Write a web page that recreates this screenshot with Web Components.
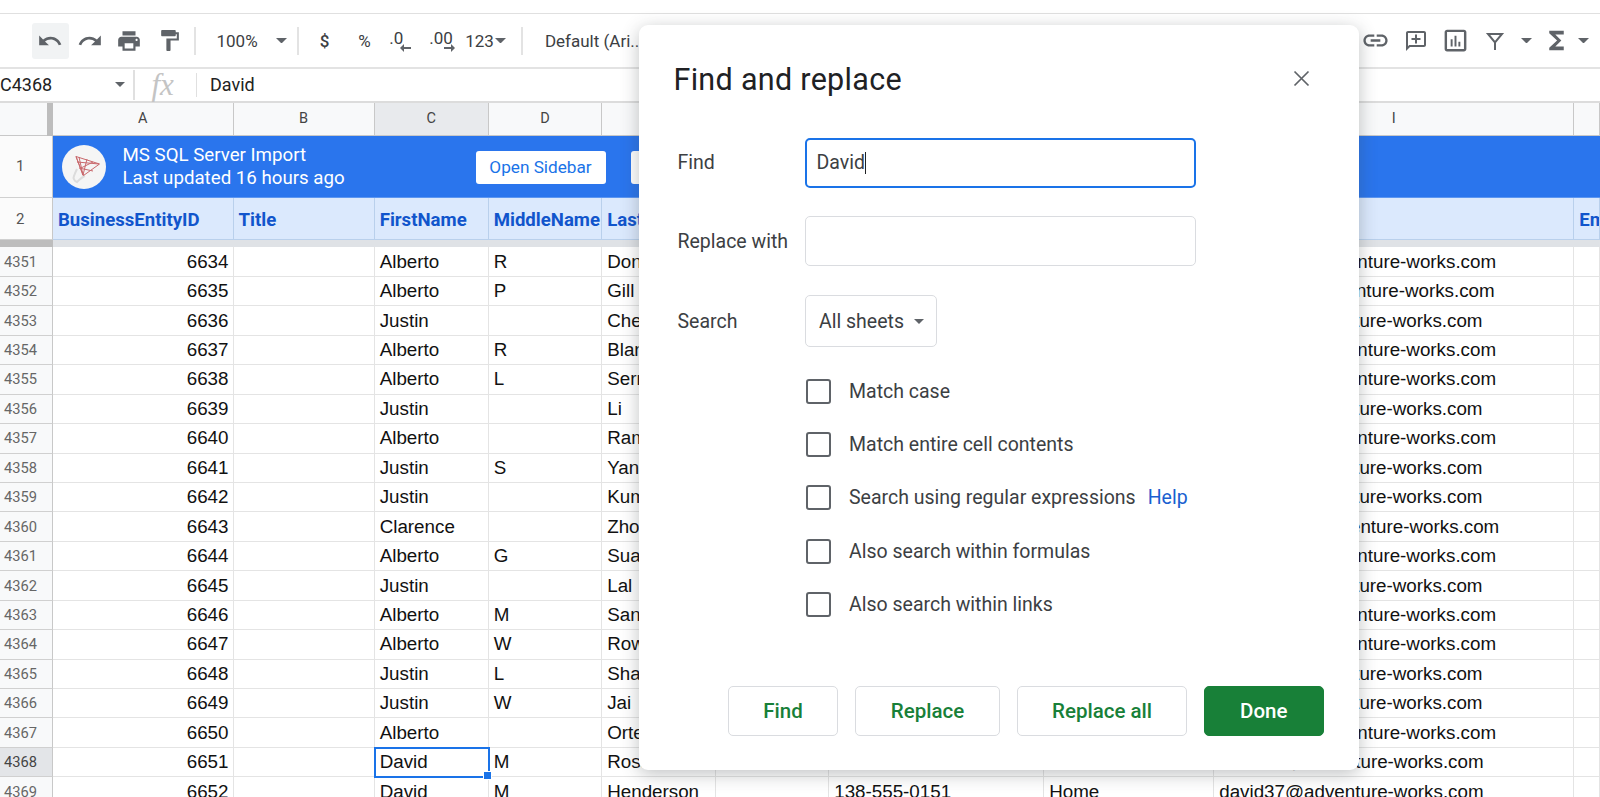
<!DOCTYPE html>
<html lang="en">
<head>
<meta charset="utf-8">
<title>Find and replace</title>
<style>
html,body{margin:0;height:797px;overflow:hidden;background:#fff;font-family:"Liberation Sans",Arial,sans-serif}
</style>
</head>
<body>
<sheet-app>
  <sheet-toolbar></sheet-toolbar>
  <formula-bar cell="C4368" value="David"></formula-bar>
  <sheet-grid></sheet-grid>
  <find-dialog slot="overlay">
    <dlg-check>Match case</dlg-check>
    <dlg-check>Match entire cell contents</dlg-check>
    <dlg-check help="Help">Search using regular expressions</dlg-check>
    <dlg-check>Also search within formulas</dlg-check>
    <dlg-check>Also search within links</dlg-check>
    <dlg-button slot="actions">Find</dlg-button>
    <dlg-button slot="actions" style="width:145px">Replace</dlg-button>
    <dlg-button slot="actions" style="width:170px">Replace all</dlg-button>
    <dlg-button slot="actions" primary style="width:119.5px">Done</dlg-button>
  </find-dialog>
</sheet-app>
<script>
function def(name, html, extra){
  class C extends HTMLElement{
    constructor(){super();this.attachShadow({mode:'open'}).innerHTML=typeof html==='function'?html(this):html;}
    connectedCallback(){ if(extra) extra(this); }
  }
  customElements.define(name,C);
}
const P={
 undo:'M12.5 8c-2.65 0-5.05.99-6.9 2.6L2 7v9h9l-3.62-3.62c1.39-1.16 3.16-1.88 5.12-1.88 3.54 0 6.55 2.31 7.6 5.5l2.37-.78C21.08 11.03 17.15 8 12.5 8z',
 redo:'M18.4 10.6C16.55 8.99 14.15 8 11.5 8c-4.65 0-8.58 3.03-9.96 7.22L3.9 16c1.05-3.19 4.05-5.5 7.6-5.5 1.95 0 3.73.72 5.12 1.88L13 16h9V7l-3.6 3.6z',
 print:'M19 8H5c-1.66 0-3 1.34-3 3v6h4v4h12v-4h4v-6c0-1.66-1.34-3-3-3zm-3 11H8v-5h8v5zm3-7c-.55 0-1-.45-1-1s.45-1 1-1 1 .45 1 1-.45 1-1 1zm-1-9H6v4h12V3z',
 paint:'M18 4V3c0-.55-.45-1-1-1H5c-.55 0-1 .45-1 1v4c0 .55.45 1 1 1h12c.55 0 1-.45 1-1V6h1v4H9v11c0 .55.45 1 1 1h2c.55 0 1-.45 1-1v-9h8V4h-3z',
 link:'M3.9 12c0-1.71 1.39-3.1 3.1-3.1h4V7H7c-2.76 0-5 2.24-5 5s2.24 5 5 5h4v-1.9H7c-1.71 0-3.1-1.39-3.1-3.1zM8 13h8v-2H8v2zm9-6h-4v1.9h4c1.71 0 3.1 1.39 3.1 3.1s-1.39 3.1-3.1 3.1h-4V17h4c2.76 0 5-2.24 5-5s-2.24-5-5-5z',
 comment:'M20 2H4c-1.1 0-2 .9-2 2v18l4-4h14c1.1 0 2-.9 2-2V4c0-1.1-.9-2-2-2zm0 14H5.2L4 17.2V4h16v12zM11 5.5h2V9h3.5v2H13v3.5h-2V11H7.5V9H11z',
 chart:'M19 3H5c-1.1 0-2 .9-2 2v14c0 1.1.9 2 2 2h14c1.1 0 2-.9 2-2V5c0-1.1-.9-2-2-2zm0 16H5V5h14v14zM8 11h1.6v6H8zm3.2-3h1.6v9h-1.6zm3.2 5H16v4h-1.6z',
 sigma:'M18 4H6v2l6.5 6L6 18v2h12v-3h-7l5-5-5-5h7z'
};
const ico=(p,s)=>`<svg width="${s}" height="${s}" viewBox="0 0 24 24" fill="#5f6368"><path d="${P[p]}"/></svg>`;
const caret=(w=11,c='#5f6368')=>`<svg width="${w}" height="${w/2}" viewBox="0 0 10 5" fill="${c}"><path d="M0 0h10L5 5z"/></svg>`;

def('sheet-app',`<style>
:host{display:block;position:relative;width:1600px;height:797px;overflow:hidden;background:#fff}
.top{height:13px;border-bottom:1.5px solid #e0e0e0}
</style><div class="top"></div><slot></slot><slot name="overlay"></slot>`);

def('sheet-toolbar',`<style>
:host{display:flex;align-items:center;height:53px;border-bottom:2px solid #e3e3e3;box-sizing:content-box;font:17px Roboto,sans-serif;color:#3c4043;padding-left:32px}
.b{display:flex;align-items:center;justify-content:center;width:36.5px;height:36px;flex:none;border-radius:3px}
.on{background:#f1f3f4}
.s{width:1.5px;height:28px;background:#e3e3e3;flex:none}
.t{flex:none;white-space:nowrap}
.d{display:flex;flex-direction:column;flex:none;line-height:18px}
.d svg{display:block;margin-top:-3px;align-self:flex-end}
.r{margin-left:auto;display:flex;align-items:center;padding-right:11px}
.w{display:flex;justify-content:center;align-items:center;flex:none}
</style>
<div class="b on">${ico('undo',26)}</div>
<div class="b" style="margin-left:3.5px">${ico('redo',26)}</div>
<div class="b" style="margin-left:2.5px">${ico('print',26)}</div>
<div class="b" style="margin-left:3.5px">${ico('paint',25)}</div>
<div class="s" style="margin-left:6.5px"></div>
<div class="t" style="margin-left:21px">100%</div>
<div class="w" style="margin-left:18px">${caret()}</div>
<div class="s" style="margin-left:10.5px"></div>
<div class="t" style="margin-left:21px;font-weight:500">$</div>
<div class="t" style="margin-left:29px">%</div>
<div class="d" style="margin-left:18.5px;width:22px"><span>.0</span><svg width="11" height="8" viewBox="0 0 11 8" fill="#5f6368"><path d="M4 0v3h7v2H4v3L0 4z"/></svg></div>
<div class="d" style="margin-left:18px;width:26px"><span>.00</span><svg width="11" height="8" viewBox="0 0 11 8" fill="#5f6368"><path d="M7 0v3H0v2h7v3l4-4z"/></svg></div>
<div class="t" style="margin-left:10px">123</div>
<div class="w" style="margin-left:1.5px">${caret()}</div>
<div class="s" style="margin-left:15px"></div>
<div class="t" style="margin-left:22px">Default (Ari...</div>
<div class="r">
<div class="w" style="width:40px">${ico('link',29)}</div>
<div class="w" style="width:40px">${ico('comment',24)}</div>
<div class="w" style="width:39px">${ico('chart',29)}</div>
<div class="w" style="width:41px"><svg width="24" height="24" viewBox="0 0 24 24" fill="none" stroke="#5f6368" stroke-width="2"><path d="M5 5h14l-7 8.5zM12 13v8"/></svg></div>
<div class="w" style="width:22px">${caret()}</div>
<div class="w" style="width:38px">${ico('sigma',29)}</div>
<div class="w" style="width:11px;margin-left:2.5px">${caret()}</div>
</div>`);

def('formula-bar',h=>`<style>
:host{display:flex;align-items:center;height:31.5px;border-bottom:2px solid #dcdcdc;font:18px Roboto,sans-serif;color:#222}
.n{width:115px;flex:none}
.s{width:1.5px;flex:none;background:#e0e0e0}
.fx{font:italic 31px "Liberation Serif",serif;color:#c4c4c4;width:24px;flex:none;margin-left:17px}
</style>
<div class="n">${h.getAttribute('cell')}</div>${caret(10)}
<div class="s" style="height:30px;margin-left:8px"></div>
<div class="fx">fx</div>
<div class="s" style="height:24px;margin-left:20px"></div>
<div style="margin-left:13px">${h.getAttribute('value')}</div>`);

const rows=[
['4351','6634','Alberto','R','Donovan','alberto10'],['4352','6635','Alberto','P','Gill','alberto11'],['4353','6636','Justin','','Chen','justin12'],
['4354','6637','Alberto','R','Blanco','alberto13'],['4355','6638','Alberto','L','Serrano','alberto14'],['4356','6639','Justin','','Li','justin15'],
['4357','6640','Alberto','','Ramos','alberto16'],['4358','6641','Justin','S','Yang','justin17'],['4359','6642','Justin','','Kumar','justin18'],
['4360','6643','Clarence','','Zhou','clarence9'],['4361','6644','Alberto','G','Suarez','alberto20'],['4362','6645','Justin','','Lal','justin21'],
['4363','6646','Alberto','M','Sanchez','alberto22'],['4364','6647','Alberto','W','Rowe','alberto23'],['4365','6648','Justin','L','Sharma','justin24'],
['4366','6649','Justin','W','Jai','justin25'],['4367','6650','Alberto','','Ortega','alberto26'],['4368','6651','David','M','Ross','david36'],
['4369','6652','David','M','Henderson','david37']];
const cols=['A','B','C','D','E','F','G','H','I',''];
function gridHTML(){
  let h='<div class="ch blank"></div><div class="bar"></div>';
  cols.forEach(c=>h+=`<div class="ch${c==='C'?' sel':''}">${c}</div>`);
  h+=`<div class="rh span">1</div><div class="banner">
    <svg class="logo" width="44" height="44" viewBox="0 0 44 44"><circle cx="22" cy="22" r="22" fill="#f5f5f5"/>
    <path d="M23 31c-3 1-6 4-8 6-3-1-4-4-3-6 1-3 2-5 3-7" fill="none" stroke="#dcdcdc" stroke-width="2"/>
    <path d="M14 11.5l23.5 7.5-16 11.5zM17 12l4 18M25 14l-4 16M31 17l-12 6M15 17l22 2M17 23l14 3M14 11.5c2 6 5 13 7 19" fill="none" stroke="#c9686c" stroke-width="1"/></svg>
    <div class="bt"><div>MS SQL Server Import</div><div>Last updated 16 hours ago</div></div>
    <div class="open">Open Sidebar</div><div class="open second"></div></div>`;
  h+='<div class="rh span">2</div>';
  ['BusinessEntityID','Title','FirstName','MiddleName','LastName','','','','','EmailPromotion'].forEach(t=>h+=`<div class="hd">${t}</div>`);
  h+='<div class="fr"></div><div class="fr"></div><div class="fz"></div>';
  rows.forEach(r=>{
    const sel=r[0]==='4368', last=r[0]==='4369';
    h+=`<div class="rh span num${sel?' rsel':''}">${r[0]}</div>
    <div class="c n">${r[1]}</div><div class="c"></div>
    <div class="c${sel?' cur':''}">${r[2]}${sel?'<i></i>':''}</div><div class="c">${r[3]}</div><div class="c">${r[4]}</div><div class="c"></div>
    <div class="c">${last?'138-555-0151':''}</div><div class="c">${last?'Home':''}</div>
    <div class="c">${r[5]}@adventure-works.com</div><div class="c"></div>`;
  });
  return h;
}
def('sheet-grid',()=>`<style>
:host{display:grid;grid-template-columns:47px 6px 180.5px 141.2px 114px 113.5px 114px 113px 215px 170px 360px 26px;grid-template-rows:33px 62.7px 42.3px 7px;grid-auto-rows:29.44px;font:18.8px "Liberation Sans",Arial,sans-serif;color:#111;overflow:hidden}
.ch{background:#f8f9fa;border-right:1.5px solid #c8c8c8;border-bottom:1.5px solid #c8c8c8;display:flex;align-items:center;justify-content:center;font:14.5px Roboto,sans-serif;color:#444;box-sizing:border-box}
.ch.sel{background:#e8eaed}
.ch.blank{border-right:0}
.bar{background:#bdbdbd}
.rh{background:#fbfbfb;border-right:1.5px solid #c8c8c8;border-bottom:1.5px solid #d0d0d0;box-sizing:border-box;display:flex;align-items:center;padding-left:0;justify-content:flex-start;font:15px Roboto,sans-serif;color:#555}
.rh.span{grid-column:1/3;padding-left:16px}
.rh.num{font-size:14.7px;padding-left:4px;color:#666;background:#f8f9fa}
.rh.rsel{background:#e3e5e8;color:#444}
.banner{grid-column:3/-1;background:#2a75ed;border-bottom:1.5px solid #5c96f1;display:flex;align-items:center;color:#fff;box-sizing:border-box;padding-top:1.5px}
.logo{margin-left:9px;flex:none}
.bt{font:18.7px/22.8px Roboto,sans-serif;margin-left:16.5px;width:353px;flex:none;white-space:nowrap}
.open{width:130px;height:33px;background:#fff;border-radius:3px;color:#1a73e8;font:400 17.2px/33px Roboto,sans-serif;text-align:center;flex:none}
.second{margin-left:25px}
.hd{background:#dbe9fd;border-right:1.5px solid #b9d0ec;border-bottom:1.5px solid #b9d0ec;box-sizing:border-box;padding:1.5px 0 0 5px;font:700 18.6px Roboto,sans-serif;color:#1155cc;display:flex;align-items:center;white-space:nowrap;overflow:hidden}
.fr{background:#bdbdbd}
.fz{grid-column:3/-1;background:#dfe2e6}
.c{border-right:1.5px solid #e4e4e4;border-bottom:1.5px solid #e4e4e4;box-sizing:border-box;padding:0 5px;display:flex;align-items:center;white-space:nowrap;overflow:hidden;position:relative}
.n{justify-content:flex-end;padding-right:4px}
.cur{outline:2px solid #1a73e8;outline-offset:-1px;overflow:visible;z-index:2}
.cur i{position:absolute;right:-4px;bottom:-4px;width:7px;height:7px;background:#1a73e8;border:1px solid #fff}
</style>${gridHTML()}`);

def('find-dialog',`<style>
:host{position:absolute;left:638.5px;top:25px;width:720px;height:745px;box-sizing:border-box;background:#fff;border-radius:9px;box-shadow:0 4px 18px rgba(60,64,67,.32);padding:35px 35px 34px;display:flex;flex-direction:column;font:19.5px Roboto,sans-serif;color:#3c4043}
.head{display:flex;align-items:center;justify-content:space-between;height:40px;margin-bottom:37.7px}
h2{margin:0 0 2px;font:400 30.5px Roboto,sans-serif;color:#202124;letter-spacing:.3px}
.x{margin:0 14px 4px 0;display:flex}
.f{display:grid;grid-template-columns:127px auto;align-items:center;padding-left:4px;justify-content:start}
.in{width:391px;height:50px;box-sizing:border-box;border:1px solid #dadce0;border-radius:5px;display:flex;align-items:center;padding-left:12px;color:#3c4043}
.in.focus{border:2px solid #1a73e8;padding-left:10px}
.in b{display:block;width:1px;height:22px;background:#202124;font-weight:400}
.sel{width:132px;height:52px;box-sizing:border-box;border:1.5px solid #dadce0;border-radius:5px;display:flex;align-items:center;padding-left:13.5px;gap:10px;color:#3c4043}
.checks{margin:17.3px 0 0 132px;display:flex;flex-direction:column}
.acts{margin-top:auto;display:flex;justify-content:flex-end;gap:17px}
</style>
<div class="head"><h2>Find and replace</h2><svg class="x" width="17" height="17" viewBox="0 0 17 17" stroke="#5f6368" stroke-width="1.7"><path d="M1.5 1.5l14 14M15.5 1.5l-14 14"/></svg></div>
<div class="f"><div>Find</div><div class="in focus"><span>David</span><b></b></div></div>
<div class="f" style="margin-top:28.5px"><div>Replace with</div><div class="in"></div></div>
<div class="f" style="margin-top:29px"><div>Search</div><div class="sel"><span>All sheets</span>${caret(10)}</div></div>
<div class="checks"><slot></slot></div>
<div class="acts"><slot name="actions"></slot></div>`);

def('dlg-check',h=>`<style>
:host{display:flex;align-items:center;height:53.3px;font:19.5px Roboto,sans-serif;color:#3c4043}
.b{width:25px;height:25px;box-sizing:border-box;border:2.5px solid #5f6368;border-radius:3px;flex:none;margin-right:18.5px}
a{color:#1a5fd0;margin-left:12px;text-decoration:none}
</style><div class="b"></div><slot></slot>${h.hasAttribute('help')?`<a>${h.getAttribute('help')}</a>`:''}`);

def('dlg-button',h=>`<style>
:host{display:flex;align-items:center;justify-content:center;width:110px;height:50px;box-sizing:border-box;border:1.5px solid #dadce0;border-radius:5px;font:500 20.5px Roboto,sans-serif;color:#188038;background:#fff}
:host([primary]){background:#188038;border-color:#188038;color:#fff}
</style><slot></slot>`);
</script>
</body>
</html>
